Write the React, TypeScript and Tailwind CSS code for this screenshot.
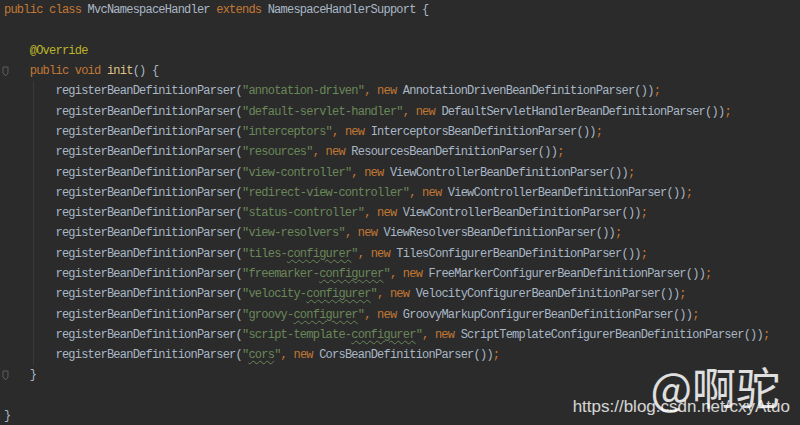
import React from "react";

const KW = "text-[#c27834]";
const STR = "text-[#6a8759]";
const ANN = "text-[#bbb529]";
const FN = "text-[#e0c48a]";

const parsers: [string, string, string?][] = [
  ["annotation-driven", "AnnotationDrivenBeanDefinitionParser"],
  ["default-servlet-handler", "DefaultServletHandlerBeanDefinitionParser"],
  ["interceptors", "InterceptorsBeanDefinitionParser"],
  ["resources", "ResourcesBeanDefinitionParser"],
  ["view-controller", "ViewControllerBeanDefinitionParser"],
  ["redirect-view-controller", "ViewControllerBeanDefinitionParser"],
  ["status-controller", "ViewControllerBeanDefinitionParser"],
  ["view-resolvers", "ViewResolversBeanDefinitionParser"],
  ["tiles-configurer", "TilesConfigurerBeanDefinitionParser", "configurer"],
  ["freemarker-configurer", "FreeMarkerConfigurerBeanDefinitionParser", "configurer"],
  ["velocity-configurer", "VelocityConfigurerBeanDefinitionParser", "configurer"],
  ["groovy-configurer", "GroovyMarkupConfigurerBeanDefinitionParser", "configurer"],
  ["script-template-configurer", "ScriptTemplateConfigurerBeanDefinitionParser", "configurer"],
  ["cors", "CorsBeanDefinitionParser", "cors"],
];

const Str: React.FC<{ value: string; typo?: string }> = ({ value, typo }) => {
  if (!typo) return <span className={STR}>"{value}"</span>;
  const i = value.lastIndexOf(typo);
  return (
    <span className={STR}>
      "{value.slice(0, i)}
      <span className="underline decoration-wavy decoration-[#6a8759] decoration-1 underline-offset-2">
        {typo}
      </span>
      {value.slice(i + typo.length)}"
    </span>
  );
};

// gutter fold marker
const FoldMark = () => (
  <svg width="8" height="11" viewBox="0 0 8 11" className="absolute left-[-2px] top-[5px]">
    <path d="M1 1 H6 V7 L3.5 10 L1 7 Z" fill="none" stroke="#5a5d60" strokeWidth="1" />
  </svg>
);

const Row: React.FC<{ children?: React.ReactNode; fold?: boolean; indent?: number }> = ({
  children,
  fold,
  indent = 0,
}) => (
  <div className="relative flex h-[20.3px] items-center whitespace-pre">
    {fold && <FoldMark />}
    <span>{" ".repeat(indent * 4)}</span>
    {children}
  </div>
);

export default function App() {
  return (
    <div
      className="relative h-[425px] w-[800px] overflow-hidden bg-[#2b2b2b] pl-[4px] text-[12px] tracking-[-0.77px] text-[#a9b7c6]"
      style={{ fontFamily: '"Liberation Mono", "DejaVu Sans Mono", monospace' }}
    >
      <Row>
        <span className={KW}>public class </span>
        <span>MvcNamespaceHandler </span>
        <span className={KW}>extends </span>
        <span>NamespaceHandlerSupport {"{"}</span>
      </Row>
      <Row />
      <Row indent={1}>
        <span className={ANN}>@Override</span>
      </Row>
      <Row indent={1} fold>
        <span className={KW}>public void </span>
        <span className={FN}>init</span>
        <span>() {"{"}</span>
      </Row>
      <div className="relative">
        <div className="absolute left-[29px] top-0 h-full w-px bg-[#3a3a3a]" />
        {parsers.map(([name, cls, typo]) => (
          <Row key={name} indent={2}>
            <span>registerBeanDefinitionParser(</span>
            <Str value={name} typo={typo} />
            <span className="text-[#cc7832]">, </span>
            <span className={KW}>new </span>
            <span>{cls}()</span>
            <span>)</span>
            <span className="text-[#cc7832]">;</span>
          </Row>
        ))}
      </div>
      <Row indent={1} fold>
        <span>{"}"}</span>
      </Row>
      <Row />
      <Row>
        <span>{"}"}</span>
      </Row>

      {/* watermark */}
      <div
        className="pointer-events-none absolute right-[20px] top-[364px] text-[44px] leading-none tracking-normal text-white/85"
        style={{ fontFamily: '"Noto Sans CJK SC", "Liberation Sans", sans-serif' }}
      >
        @啊驼
      </div>
      <div
        className="pointer-events-none absolute right-[10px] top-[394px] text-[17px] tracking-normal text-white/80"
        style={{ fontFamily: '"Liberation Sans", Arial, sans-serif' }}
      >
        https://blog.csdn.net/cxyAtuo
      </div>
    </div>
  );
}
